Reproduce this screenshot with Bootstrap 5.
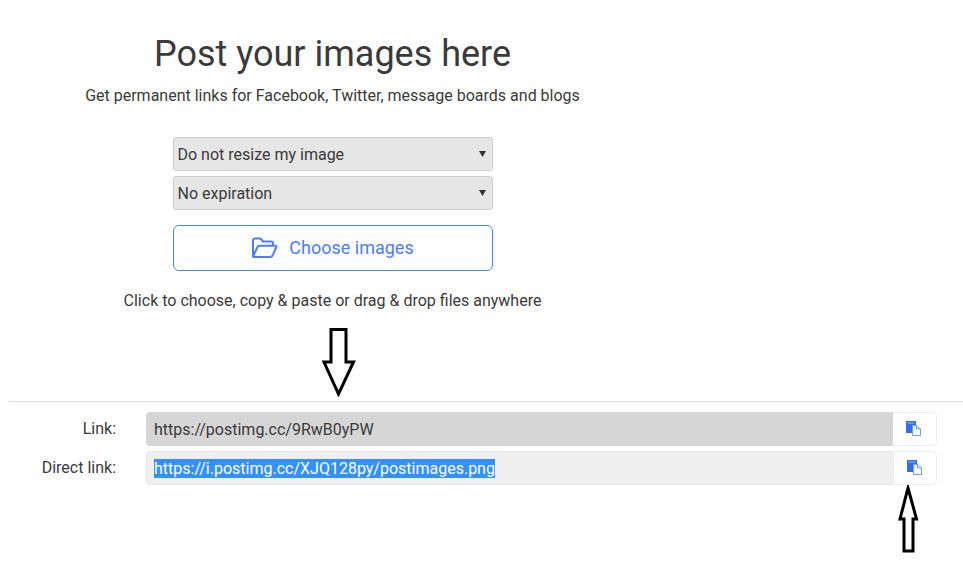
<!DOCTYPE html>
<html lang="en">
<head>
<meta charset="utf-8">
<title>Post your images here</title>
<link href="https://cdn.jsdelivr.net/npm/bootstrap@5.3.0/dist/css/bootstrap.min.css" rel="stylesheet">
<style>
html,body{height:565px;overflow:hidden}
body{font-family:Roboto,"Liberation Sans",sans-serif;font-size:16px;color:#3a3a3a;background:#fff}
.upload-col{width:665px;padding-top:33px}
.page-title{font-size:36px;line-height:43px;font-weight:400;margin:0 0 8px}
.page-sub{line-height:24px;margin:0 0 29px}
.opt-stack{width:320px;gap:5px}
.opt-select{height:34px;padding:1px 4px 0;font-size:16px;line-height:32px;color:#3a3a3a;background-color:#e6e6e6;border:1px solid #ccc;border-radius:3px;appearance:none;background-image:url("data:image/svg+xml,%3Csvg xmlns='http://www.w3.org/2000/svg' width='8' height='6'%3E%3Cpath d='M0 0h7L3.5 6z' fill='%23333'/%3E%3C/svg%3E");background-repeat:no-repeat;background-position:right 5px center;font-family:inherit}
.choose-btn{width:320px;height:46px;margin-top:15px;border:1px solid #3d87f5;border-radius:6px;color:#4d7cfe;font-size:18px;background:#fff;gap:11px}
.choose-btn:hover{color:#4d7cfe;background:#fff;border-color:#3d87f5}
.choose-btn span{position:relative;top:-1px}
.drop-note{line-height:24px;margin:18px 0 0}
.arrow-down{display:block;margin:15px 0 0 321px}
.rule-line{height:1px;background:#ddd;margin:4px 0 10px 9px}
.link-row{height:34px;margin-bottom:5px;padding-right:26px}
.link-label{width:146px;padding-right:30px;text-align:right;line-height:34px}
.link-field{flex:1;padding:0 7px;line-height:34px;border-radius:4px 0 0 4px;white-space:nowrap;background:#efefef;border:1px solid #e8e8e8;border-right:0}
.link-field-dark{background:#d6d6d6;border-color:#d6d6d6}
.picked{background:#3390ff;color:#fff}
.copy-btn{width:44px;border:1px solid #eee;border-left:0;border-radius:0 4px 4px 0;background:#fff}
.link-row-alt .copy-btn{border-left:1px solid #eee}
.copy-icon{margin:0 2px 2px 0}
.arrow-up{display:block;margin:-5px 0 0 898px}
</style>
</head>
<body>
<div class="upload-col text-center">
  <h1 class="page-title">Post your images here</h1>
  <p class="page-sub">Get permanent links for Facebook, Twitter, message boards and blogs</p>
  <div class="d-flex flex-column align-items-center">
    <div class="opt-stack d-flex flex-column">
      <select class="opt-select w-100"><option>Do not resize my image</option></select>
      <select class="opt-select w-100"><option>No expiration</option></select>
    </div>
    <button type="button" class="btn choose-btn d-flex align-items-center justify-content-center p-0">
      <svg width="27" height="22" viewBox="0 0 27 22" fill="none" stroke="#4d7cfe" stroke-width="2" stroke-linejoin="round"><path d="M2 19V3.5Q2 1.5 4 1.5H9.5L12 4.5H20Q22 4.5 22 6.5V8.5"/><path d="M2 19.5 6.5 10Q7 8.8 8.5 8.8H24Q26 8.8 25.2 10.5L21.5 18.5Q21 20 19 20H3Z"/></svg>
      <span>Choose images</span>
    </button>
  </div>
  <p class="drop-note">Click to choose, copy &amp; paste or drag &amp; drop files anywhere</p>
</div>
<svg class="arrow-down" width="36" height="69" viewBox="0 0 36 69" fill="#fff" stroke="#000" stroke-width="3"><path d="M10 1.5H25V34H32.5L17.5 66 3 34H10Z"/></svg>
<div class="rule-line"></div>
<div class="link-row d-flex">
  <div class="link-label">Link:</div>
  <div class="link-field link-field-dark">https://postimg.cc/9RwB0yPW</div>
  <div class="copy-btn d-flex align-items-center justify-content-center">
    <svg class="copy-icon" width="15" height="15" viewBox="0 0 15 15"><path d="M0 0h10v4H6v8H0z" fill="#2f6fe8"/><path d="M1.5 2h7" stroke="#9fbdf5"/><path d="M6.5 4.5h4L14.5 8v6.5H6.5z" fill="#fff" stroke="#6f9bf2"/><path d="M10.5 4.5V8h4" fill="none" stroke="#6f9bf2"/></svg>
  </div>
</div>
<div class="link-row link-row-alt d-flex">
  <div class="link-label">Direct link:</div>
  <div class="link-field"><span class="picked">https://i.postimg.cc/XJQ128py/postimages.png</span></div>
  <div class="copy-btn d-flex align-items-center justify-content-center">
    <svg class="copy-icon" width="15" height="15" viewBox="0 0 15 15"><path d="M0 0h10v4H6v8H0z" fill="#2f6fe8"/><path d="M1.5 2h7" stroke="#9fbdf5"/><path d="M6.5 4.5h4L14.5 8v6.5H6.5z" fill="#fff" stroke="#6f9bf2"/><path d="M10.5 4.5V8h4" fill="none" stroke="#6f9bf2"/></svg>
  </div>
</div>
<svg class="arrow-up" width="22" height="69" viewBox="0 0 22 69" fill="#fff" stroke="#000" stroke-width="3"><path d="M10 3 18.5 34H15V66H6V34H2Z"/></svg>
<script src="https://cdn.jsdelivr.net/npm/bootstrap@5.3.0/dist/js/bootstrap.bundle.min.js"></script>
</body>
</html>
